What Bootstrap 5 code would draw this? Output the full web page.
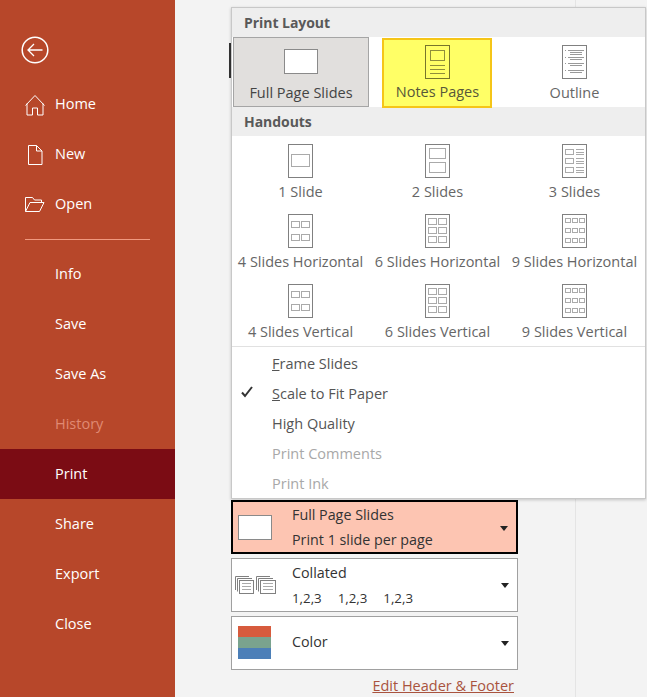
<!DOCTYPE html>
<html lang="en"><head><meta charset="utf-8"><title>Print</title>
<link href="https://cdn.jsdelivr.net/npm/bootstrap@5.3.0/dist/css/bootstrap.min.css" rel="stylesheet">
<style>
html,body{height:697px;overflow:hidden}
body{font-family:"Open Sans","Noto Sans",sans-serif;font-size:14.5px;background:#f3f3f3;color:#444;position:relative}
.shell{height:697px}
.bs-side{width:175px;background:#b7472a;color:#fff;padding-top:25px}
.bs-back{height:50px;margin-bottom:4px;padding-left:21px;display:flex;align-items:center}
.bs-item{height:50px;display:flex;align-items:center;padding-left:55px;position:relative;color:#fff;text-decoration:none}
.bs-item svg{position:absolute;left:24px;top:15px}
.bs-item.off{color:#e08a73}
.bs-item.on{background:#7b0c14}
.bs-rule{height:1px;background:#f0997f;margin:10px 25px 9px 25px}
.bs-pane{width:401px;border-right:1px solid #e4e4e4;padding:500px 0 0 56px}
.bs-pick{width:287px;height:54px;margin-bottom:4px;background:#fff;border:1px solid #a0a0a0;display:flex;align-items:center;position:relative;padding-left:60px;color:#333;line-height:25px;font-size:14.3px}
.bs-pick.cur{background:#fdc5b2;border:2px solid #000;padding-left:59px}
.bs-pick.solo{padding-bottom:4px}
.bs-pick .ico{position:absolute;left:6px}
.bs-pick.cur .ico{left:5px}
.bs-pick .ico.stack{left:3px;top:17px}
.bs-pick.solo .ico{top:9px}
.bs-pick::after{content:"";position:absolute;right:8px;top:24px;border:4.5px solid transparent;border-top:5px solid #222;border-bottom:0}
.bs-nums{word-spacing:12.5px;font-size:13.3px}
.bs-edit{display:block;width:283px;text-align:right;color:#a9533e;margin-top:2px;line-height:24px}
.bs-tick{position:absolute;left:229px;top:43px;width:2px;height:35px;background:#333}
.bs-pop{position:absolute;left:231px;top:7px;width:415px;height:492px;background:#fff;border:1px solid #c8c8c8;box-shadow:0 1px 3px rgba(0,0,0,.2)}
.bs-head{height:29px;background:#eee;font-weight:700;font-size:14px;color:#595959;padding-left:12px;line-height:29px;letter-spacing:-.05px}
.bs-grid{width:411px}
.bs-top{height:70px}
.bs-cell{height:70px;padding-top:8px;text-align:center;color:#666;line-height:20px;white-space:nowrap;display:flex;flex-direction:column;align-items:center}
.bs-cell svg{display:block;margin-bottom:4px;height:34px}
.bs-cell.act{background:#e1dfdd;border:1px solid #a5a5a5;color:#444;margin-left:1px;margin-right:0;padding-top:11px}
.bs-cell.act svg{height:27px;margin-bottom:7px}
.bs-cell.mark-y{background:#ffff66;border:2px solid #f5c518;width:110px;margin:1px auto 0;padding-top:5px;color:#57573a}
.bs-cell.mark-y svg{margin-bottom:3px}
.bs-sep{border-top:1px solid #e1e1e1;padding-top:2px}
.bs-opt{height:30px;line-height:30px;padding-left:40px;position:relative;color:#555}
.bs-opt.dis{color:#a8a8a8}
.bs-opt svg{position:absolute;left:9px;top:7px}
</style></head>
<body>
<svg width="0" height="0" class="position-absolute">
<defs>
<g id="pg"><rect x=".5" y=".5" width="24" height="33" fill="#fff" stroke="#808080"/></g>
<symbol id="slide1" viewBox="0 0 25 34"><use href="#pg"/><rect x="3.500" y="10.500" width="18" height="12" fill="none" stroke="#aaa"/></symbol>
<symbol id="slide2" viewBox="0 0 25 34"><use href="#pg"/><rect x="4.500" y="4.500" width="16" height="10" fill="none" stroke="#aaa"/><rect x="4.500" y="18.500" width="16" height="10" fill="none" stroke="#aaa"/></symbol>
<symbol id="slide3" viewBox="0 0 25 34"><use href="#pg"/><g fill="none" stroke="#aaa"><rect x="3.500" y="5.500" width="8" height="5"/><rect x="3.500" y="14.500" width="8" height="5"/><rect x="3.500" y="23.500" width="8" height="5"/><path d="M14 5.500h8M14 8.500h8M14 10.500h8M14 14.500h8M14 17.500h8M14 19.500h8M14 23.500h8M14 26.500h8M14 28.500h8"/></g></symbol>
<symbol id="slide4" viewBox="0 0 25 34"><use href="#pg"/><g fill="none" stroke="#aaa"><rect x="3.500" y="7.500" width="8" height="6"/><rect x="13.500" y="7.500" width="8" height="6"/><rect x="3.500" y="20.500" width="8" height="6"/><rect x="13.500" y="20.500" width="8" height="6"/></g></symbol>
<symbol id="slide6" viewBox="0 0 25 34"><use href="#pg"/><g fill="none" stroke="#aaa"><rect x="3.500" y="4.500" width="8" height="6"/><rect x="13.500" y="4.500" width="8" height="6"/><rect x="3.500" y="13.500" width="8" height="6"/><rect x="13.500" y="13.500" width="8" height="6"/><rect x="3.500" y="22.500" width="8" height="6"/><rect x="13.500" y="22.500" width="8" height="6"/></g></symbol>
<symbol id="slide9" viewBox="0 0 25 34"><use href="#pg"/><g fill="none" stroke="#aaa"><rect x="3.500" y="4.500" width="5" height="4"/><rect x="10.500" y="4.500" width="5" height="4"/><rect x="17.500" y="4.500" width="5" height="4"/><rect x="3.500" y="14.500" width="5" height="4"/><rect x="10.500" y="14.500" width="5" height="4"/><rect x="17.500" y="14.500" width="5" height="4"/><rect x="3.500" y="24.500" width="5" height="4"/><rect x="10.500" y="24.500" width="5" height="4"/><rect x="17.500" y="24.500" width="5" height="4"/></g></symbol>
<symbol id="notes" viewBox="0 0 25 34"><rect x=".5" y=".5" width="24" height="33" fill="none" stroke="#77752b"/><g fill="none" stroke="#8f8d3a"><rect x="5.500" y="5.500" width="14" height="10"/><path d="M5 20.500h15M5 24.500h15M5 28.500h15"/></g></symbol>
<symbol id="outline" viewBox="0 0 25 34"><use href="#pg"/><g stroke="#999" fill="none"><path d="M3 5.500h1M3 12.500h1M3 18.500h1M3 25.500h1"/><path d="M6 5.500h16M8 7.500h12M8 9.500h12M6 12.500h16M8 14.500h12M6 18.500h16M8 20.500h12M6 25.500h16M8 27.500h12"/></g></symbol>
</defs></svg>

<div class="shell d-flex">
<nav class="bs-side flex-shrink-0">
 <div class="bs-back"><svg width="28" height="28" viewBox="0 0 28 28" fill="none" stroke="#fff"><circle cx="14" cy="14" r="12.800" stroke-width="1.500"/><path d="M21.500 14H7M13 8l-6 6 6 6" stroke-width="1.300"/></svg></div>
 <a class="bs-item" href="#"><svg width="22" height="22" viewBox="0 0 22 22" fill="none" stroke="#fff"><path d="M1.500 11.500 11 1.500l9.500 10M3 9.500v11.500h5.500v-7h5v7H19V9.500"/></svg>Home</a>
 <a class="bs-item" href="#"><svg width="22" height="22" viewBox="0 0 22 22" fill="none" stroke="#fff"><path d="M4.500 1.500v19h13.500V7l-5.500-5.500zM12.500 1.500V7H18"/></svg>New</a>
 <a class="bs-item" href="#"><svg width="22" height="22" viewBox="0 0 22 22" fill="none" stroke="#fff"><path d="M1.500 17.500v-14h7l2 2.500h7v2.500M1.500 17.500h14l4.500-9H6z"/></svg>Open</a>
 <div class="bs-rule"></div>
 <a class="bs-item" href="#">Info</a>
 <a class="bs-item" href="#">Save</a>
 <a class="bs-item" href="#">Save As</a>
 <a class="bs-item off" href="#">History</a>
 <a class="bs-item on" href="#">Print</a>
 <a class="bs-item" href="#">Share</a>
 <a class="bs-item" href="#">Export</a>
 <a class="bs-item" href="#">Close</a>
</nav>
<main class="bs-pane flex-shrink-0">
 <div class="bs-pick cur">
  <svg class="ico" width="34" height="25" viewBox="0 0 34 25"><rect x=".5" y=".5" width="33" height="24" fill="#fff" stroke="#8a8a8a"/></svg>
  <div>Full Page Slides<br>Print 1 slide per page</div>
 </div>
 <div class="bs-pick">
  <svg class="ico stack" width="41" height="18" viewBox="0 0 41 18" fill="none" stroke="#808080">
   <path d="M.5 14V.5H14M2.500 15.500V2.500H17"/><rect x="4.500" y="4.500" width="14" height="13" fill="#fff"/><path d="M7 7.500h9M7 10.500h9M7 13.500h9" stroke="#aaa"/>
   <path d="M21.500 14V.5H35M23.500 15.500V2.500H38"/><rect x="25.500" y="4.500" width="15" height="13" fill="#fff"/><path d="M28 7.500h10M28 10.500h10M28 13.500h10" stroke="#aaa"/>
  </svg>
  <div>Collated<br><span class="bs-nums">1,2,3 1,2,3 1,2,3</span></div>
 </div>
 <div class="bs-pick solo">
  <svg class="ico" width="33" height="33" viewBox="0 0 33 33"><rect width="33" height="11" fill="#d75b3d"/><rect y="11" width="33" height="11" fill="#7aa38e"/><rect y="22" width="33" height="11" fill="#4c7fb8"/></svg>
  <div>Color</div>
 </div>
 <a class="bs-edit" href="#">Edit Header &amp; Footer</a>
</main>
<div class="flex-grow-1"></div>
</div>

<div class="bs-tick"></div>
<div class="bs-pop">
 <div class="bs-head">Print Layout</div>
 <div class="row row-cols-3 g-0 bs-grid bs-top">
  <div class="col"><div class="bs-cell act"><svg width="34" height="27" viewBox="0 0 34 27"><rect x=".5" y=".5" width="33" height="24" fill="#fff" stroke="#8a8a8a"/></svg>Full Page Slides</div></div>
  <div class="col"><div class="bs-cell mark-y"><svg width="25" height="34"><use href="#notes"/></svg>Notes Pages</div></div>
  <div class="col"><div class="bs-cell"><svg width="25" height="34"><use href="#outline"/></svg>Outline</div></div>
 </div>
 <div class="bs-head">Handouts</div>
 <div class="row row-cols-3 g-0 bs-grid">
  <div class="col"><div class="bs-cell"><svg width="25" height="34"><use href="#slide1"/></svg>1 Slide</div></div>
  <div class="col"><div class="bs-cell"><svg width="25" height="34"><use href="#slide2"/></svg>2 Slides</div></div>
  <div class="col"><div class="bs-cell"><svg width="25" height="34"><use href="#slide3"/></svg>3 Slides</div></div>
  <div class="col"><div class="bs-cell"><svg width="25" height="34"><use href="#slide4"/></svg>4 Slides Horizontal</div></div>
  <div class="col"><div class="bs-cell"><svg width="25" height="34"><use href="#slide6"/></svg>6 Slides Horizontal</div></div>
  <div class="col"><div class="bs-cell"><svg width="25" height="34"><use href="#slide9"/></svg>9 Slides Horizontal</div></div>
  <div class="col"><div class="bs-cell"><svg width="25" height="34"><use href="#slide4"/></svg>4 Slides Vertical</div></div>
  <div class="col"><div class="bs-cell"><svg width="25" height="34"><use href="#slide6"/></svg>6 Slides Vertical</div></div>
  <div class="col"><div class="bs-cell"><svg width="25" height="34"><use href="#slide9"/></svg>9 Slides Vertical</div></div>
 </div>
 <div class="bs-sep">
  <div class="bs-opt"><u>F</u>rame Slides</div>
  <div class="bs-opt"><svg width="12" height="12" viewBox="0 0 12 12" fill="none" stroke="#333" stroke-width="2"><path d="M1 6.500 4 10l7-9"/></svg><u>S</u>cale to Fit Paper</div>
  <div class="bs-opt">High Quality</div>
  <div class="bs-opt dis">Print Comments</div>
  <div class="bs-opt dis">Print Ink</div>
 </div>
</div>
<script src="https://cdn.jsdelivr.net/npm/bootstrap@5.3.0/dist/js/bootstrap.bundle.min.js"></script>
</body></html>
